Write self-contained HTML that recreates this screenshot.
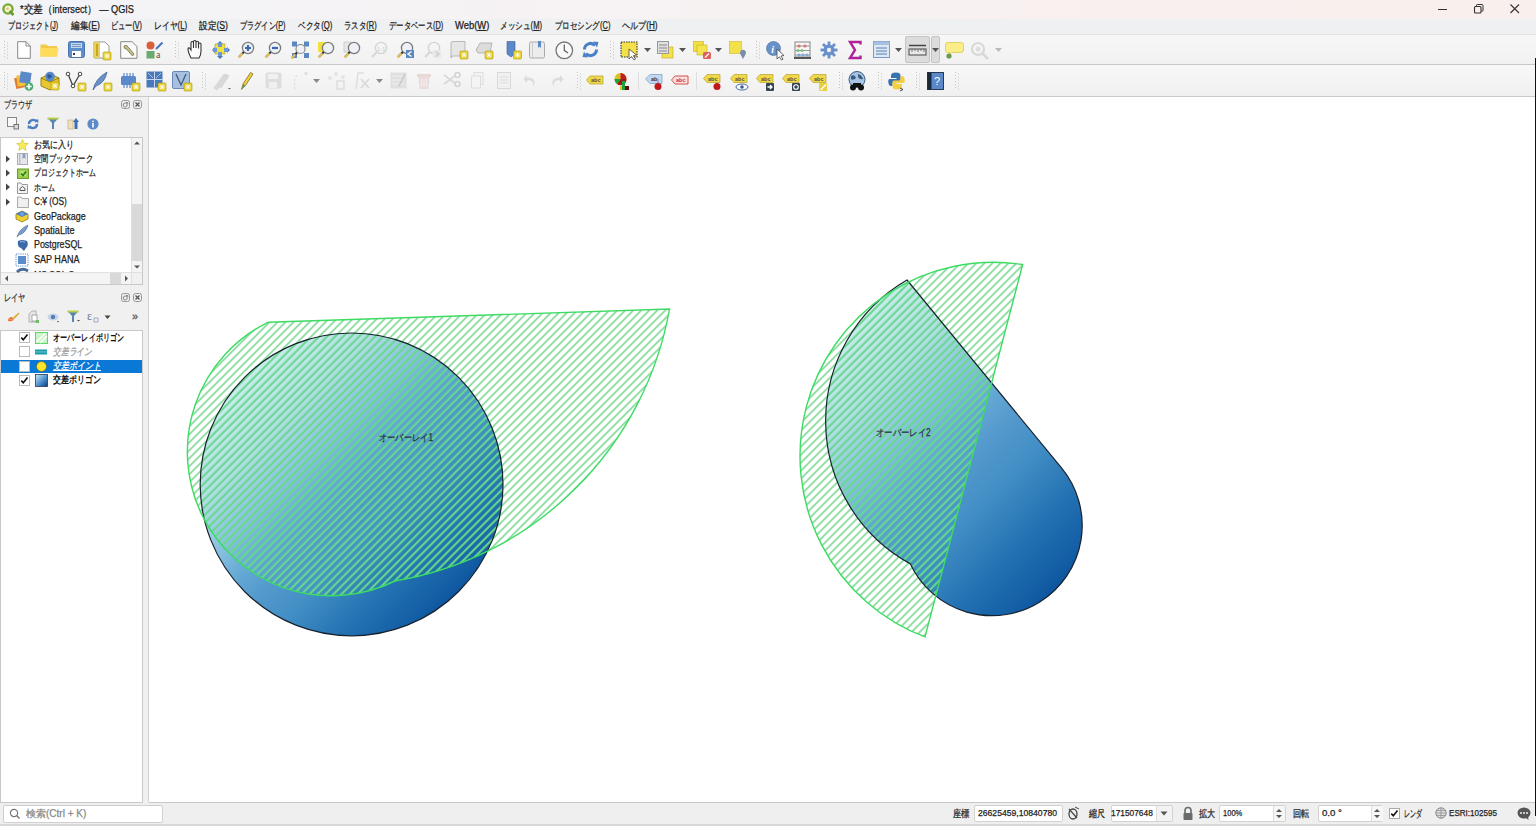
<!DOCTYPE html><html><head><meta charset="utf-8"><style>html,body{margin:0;padding:0;}
body{width:1536px;height:826px;overflow:hidden;position:relative;background:#f0f0f0;font-family:"Liberation Sans", sans-serif;}
.t{position:absolute;white-space:nowrap;line-height:1.2;-webkit-text-stroke:0.25px currentColor;}
svg{overflow:visible}
</style></head><body><div style="position:absolute;left:0px;top:0px;width:1536px;height:19px;background:linear-gradient(90deg,#f3f4f8 0%,#f7f2f3 40%,#f9efec 100%)"></div><svg style="position:absolute;left:2px;top:3px;" width="13" height="13" viewBox="0 0 13 13"><circle cx="6" cy="6" r="4.6" fill="#f0f7c0" stroke="#7aa83a" stroke-width="2.4"/><circle cx="5.5" cy="5.8" r="1.3" fill="#e7b39a"/><path d="M7.5 8 L11.5 12" stroke="#6b9a2e" stroke-width="2.6"/></svg><div class="t" style="left:19.5px;top:3px;font-size:10.5px;color:#1a1a1a;font-weight:normal;font-style:normal;"><span style="display:inline-block;transform:scaleX(0.8745);transform-origin:0 0;">*交差（intersect） — QGIS</span></div><svg style="position:absolute;left:1437px;top:3px;" width="12" height="12" viewBox="0 0 12 12"><path d="M1 6.5 H10" stroke="#333" stroke-width="1"/></svg><svg style="position:absolute;left:1473px;top:3px;" width="12" height="12" viewBox="0 0 12 12"><rect x="1.5" y="3.5" width="6.5" height="6.5" rx="1" fill="none" stroke="#333" stroke-width="1.1"/><path d="M3.5 3.2 V2.2 Q3.5 1.5 4.2 1.5 H9 Q10 1.5 10 2.5 V7.5 Q10 8.2 9.2 8.2 H8.3" fill="none" stroke="#333" stroke-width="1"/></svg><svg style="position:absolute;left:1509px;top:3px;" width="12" height="12" viewBox="0 0 12 12"><path d="M1.5 1.5 L10 10 M10 1.5 L1.5 10" stroke="#333" stroke-width="1.1"/></svg><div style="position:absolute;left:0px;top:19px;width:1536px;height:15px;background:#eff0f1"></div><div class="t" style="left:8.4px;top:20px;font-size:10px;color:#222;font-weight:normal;font-style:normal;"><span style="display:inline-block;transform:scaleX(0.7003);transform-origin:0 0;">プロジェクト(<u>J</u>)</span></div><div class="t" style="left:70.8px;top:20px;font-size:10px;color:#222;font-weight:normal;font-style:normal;"><span style="display:inline-block;transform:scaleX(0.8633);transform-origin:0 0;">編集(<u>E</u>)</span></div><div class="t" style="left:110.6px;top:20px;font-size:10px;color:#222;font-weight:normal;font-style:normal;"><span style="display:inline-block;transform:scaleX(0.7150);transform-origin:0 0;">ビュー(<u>V</u>)</span></div><div class="t" style="left:153.8px;top:20px;font-size:10px;color:#222;font-weight:normal;font-style:normal;"><span style="display:inline-block;transform:scaleX(0.7858);transform-origin:0 0;">レイヤ(<u>L</u>)</span></div><div class="t" style="left:199px;top:20px;font-size:10px;color:#222;font-weight:normal;font-style:normal;"><span style="display:inline-block;transform:scaleX(0.8693);transform-origin:0 0;">設定(<u>S</u>)</span></div><div class="t" style="left:240px;top:20px;font-size:10px;color:#222;font-weight:normal;font-style:normal;"><span style="display:inline-block;transform:scaleX(0.7165);transform-origin:0 0;">プラグイン(<u>P</u>)</span></div><div class="t" style="left:297.6px;top:20px;font-size:10px;color:#222;font-weight:normal;font-style:normal;"><span style="display:inline-block;transform:scaleX(0.7736);transform-origin:0 0;">ベクタ(<u>Q</u>)</span></div><div class="t" style="left:344.4px;top:20px;font-size:10px;color:#222;font-weight:normal;font-style:normal;"><span style="display:inline-block;transform:scaleX(0.7445);transform-origin:0 0;">ラスタ(<u>R</u>)</span></div><div class="t" style="left:388.7px;top:20px;font-size:10px;color:#222;font-weight:normal;font-style:normal;"><span style="display:inline-block;transform:scaleX(0.7332);transform-origin:0 0;">データベース(<u>D</u>)</span></div><div class="t" style="left:455px;top:20px;font-size:10px;color:#222;font-weight:normal;font-style:normal;"><span style="display:inline-block;transform:scaleX(0.9421);transform-origin:0 0;">Web(<u>W</u>)</span></div><div class="t" style="left:500.4px;top:20px;font-size:10px;color:#222;font-weight:normal;font-style:normal;"><span style="display:inline-block;transform:scaleX(0.7650);transform-origin:0 0;">メッシュ(<u>M</u>)</span></div><div class="t" style="left:554.6px;top:20px;font-size:10px;color:#222;font-weight:normal;font-style:normal;"><span style="display:inline-block;transform:scaleX(0.7494);transform-origin:0 0;">プロセシング(<u>C</u>)</span></div><div class="t" style="left:622px;top:20px;font-size:10px;color:#222;font-weight:normal;font-style:normal;"><span style="display:inline-block;transform:scaleX(0.8083);transform-origin:0 0;">ヘルプ(<u>H</u>)</span></div><div style="position:absolute;left:0px;top:34px;width:1536px;height:31px;background:linear-gradient(#f7f7f7,#f1f1f1);border-top:1px solid #e2e2e2;box-sizing:border-box"></div><div style="position:absolute;left:0px;top:64px;width:1536px;height:1px;background:#c9c9c9"></div><div style="position:absolute;left:0px;top:65px;width:1536px;height:31px;background:linear-gradient(#f8f8f8,#f0f0f0)"></div><div style="position:absolute;left:0px;top:96px;width:1536px;height:1px;background:#c9c9c9"></div><div style="position:absolute;left:0px;top:97px;width:148px;height:705px;background:#f0f0f0"></div><div style="position:absolute;left:148px;top:97px;width:1px;height:705px;background:#d2d2d2"></div><div class="t" style="left:3.5px;top:98.5px;font-size:10px;color:#333;font-weight:normal;font-style:normal;"><span style="display:inline-block;transform:scaleX(0.7125);transform-origin:0 0;">ブラウザ</span></div><svg style="position:absolute;left:121px;top:100px;" width="9" height="9" viewBox="0 0 9 9"><rect x="0.5" y="0.5" width="8" height="8" rx="2" fill="#eee" stroke="#999"/><circle cx="4.2" cy="5" r="2" fill="none" stroke="#888" stroke-width="1"/><path d="M5 2.5 H6.8 V4" stroke="#888" fill="none"/></svg><svg style="position:absolute;left:133px;top:100px;" width="9" height="9" viewBox="0 0 9 9"><rect x="0.5" y="0.5" width="8" height="8" rx="2" fill="#eee" stroke="#999"/><path d="M2.5 2.5 L6.5 6.5 M6.5 2.5 L2.5 6.5" stroke="#555" stroke-width="1.3"/></svg><div style="position:absolute;left:0px;top:137px;width:143px;height:148px;background:#fff;border:1px solid #c8c8c8;box-sizing:border-box"></div><div style="position:absolute;left:131px;top:138px;width:11px;height:134px;background:#f4f4f4;border-left:1px solid #e0e0e0;box-sizing:border-box"></div><div style="position:absolute;left:132px;top:204px;width:10px;height:57px;background:#d9d9d9"></div><svg style="position:absolute;left:132px;top:138px;" width="10" height="10" viewBox="0 0 10 10"><path d="M2 6.5 L5 3.5 L8 6.5Z" fill="#555"/></svg><svg style="position:absolute;left:132px;top:262px;" width="10" height="10" viewBox="0 0 10 10"><path d="M2 3.5 L5 6.5 L8 3.5Z" fill="#555"/></svg><div style="position:absolute;left:1px;top:272px;width:130px;height:12px;background:#f4f4f4;border-top:1px solid #e0e0e0;box-sizing:border-box"></div><div style="position:absolute;left:110px;top:273px;width:11px;height:11px;background:#d9d9d9"></div><svg style="position:absolute;left:1px;top:273px;" width="11" height="11" viewBox="0 0 11 11"><path d="M7 2.5 L4 5.5 L7 8.5Z" fill="#555"/></svg><svg style="position:absolute;left:121px;top:273px;" width="11" height="11" viewBox="0 0 11 11"><path d="M4 2.5 L7 5.5 L4 8.5Z" fill="#555"/></svg><div style="position:absolute;left:131px;top:272px;width:11px;height:12px;background:#f0f0f0;border-top:1px solid #e0e0e0;border-left:1px solid #e0e0e0;box-sizing:border-box"></div><div style="position:absolute;left:1px;top:138px;width:130px;height:134px;overflow:hidden"><div class="t" style="left:33px;top:0.5px;font-size:10px;color:#222;font-weight:normal;font-style:normal;"><span style="display:inline-block;transform:scaleX(0.8000);transform-origin:0 0;">お気に入り</span></div><div class="t" style="left:33px;top:15.0px;font-size:10px;color:#222;font-weight:normal;font-style:normal;"><span style="display:inline-block;transform:scaleX(0.7375);transform-origin:0 0;">空間ブックマーク</span></div><svg style="position:absolute;left:4px;top:16.5px" width="6" height="8"><path d="M1 0.5 L5 4 L1 7.5Z" fill="#444"/></svg><div class="t" style="left:33px;top:29.3px;font-size:10px;color:#222;font-weight:normal;font-style:normal;"><span style="display:inline-block;transform:scaleX(0.6922);transform-origin:0 0;">プロジェクトホーム</span></div><svg style="position:absolute;left:4px;top:30.8px" width="6" height="8"><path d="M1 0.5 L5 4 L1 7.5Z" fill="#444"/></svg><div class="t" style="left:33px;top:43.8px;font-size:10px;color:#222;font-weight:normal;font-style:normal;"><span style="display:inline-block;transform:scaleX(0.7000);transform-origin:0 0;">ホーム</span></div><svg style="position:absolute;left:4px;top:45.3px" width="6" height="8"><path d="M1 0.5 L5 4 L1 7.5Z" fill="#444"/></svg><div class="t" style="left:33px;top:58.2px;font-size:10px;color:#222;font-weight:normal;font-style:normal;"><span style="display:inline-block;transform:scaleX(0.8314);transform-origin:0 0;">C:¥ (OS)</span></div><svg style="position:absolute;left:4px;top:59.7px" width="6" height="8"><path d="M1 0.5 L5 4 L1 7.5Z" fill="#444"/></svg><div class="t" style="left:33px;top:72.5px;font-size:10px;color:#222;font-weight:normal;font-style:normal;"><span style="display:inline-block;transform:scaleX(0.8940);transform-origin:0 0;">GeoPackage</span></div><div class="t" style="left:33px;top:87.0px;font-size:10px;color:#222;font-weight:normal;font-style:normal;"><span style="display:inline-block;transform:scaleX(0.9127);transform-origin:0 0;">SpatiaLite</span></div><div class="t" style="left:33px;top:101.4px;font-size:10px;color:#222;font-weight:normal;font-style:normal;"><span style="display:inline-block;transform:scaleX(0.8865);transform-origin:0 0;">PostgreSQL</span></div><div class="t" style="left:33px;top:115.7px;font-size:10px;color:#222;font-weight:normal;font-style:normal;"><span style="display:inline-block;transform:scaleX(0.9010);transform-origin:0 0;">SAP HANA</span></div><div class="t" style="left:33px;top:131.5px;font-size:10px;color:#222;font-weight:normal;font-style:normal;"><span style="display:inline-block;transform:scaleX(0.8614);transform-origin:0 0;">MS SQL Server</span></div></div><svg style="position:absolute;left:16px;top:139px;" width="13" height="12" viewBox="0 0 13 12"><path d="M6.5 0.5 L8.2 4.3 L12.3 4.6 L9.1 7.3 L10.2 11.4 L6.5 9.2 L2.8 11.4 L3.9 7.3 L0.7 4.6 L4.8 4.3Z" fill="#f8ec5a" stroke="#c8b830" stroke-width="0.6"/></svg><svg style="position:absolute;left:17px;top:153px;" width="11" height="12" viewBox="0 0 11 12"><rect x="0.5" y="0.5" width="10" height="11" fill="#e8e8ec" stroke="#aab"/><rect x="2" y="0.5" width="1.5" height="11" fill="#bbc"/><path d="M5.5 0.5 V6 L7 4.8 L8.5 6 V0.5" fill="#8aa0c0"/></svg><svg style="position:absolute;left:17px;top:168px;" width="12" height="11" viewBox="0 0 12 11"><rect x="0.5" y="1" width="11" height="9.5" fill="#9ad04a" stroke="#6a9a30"/><path d="M3 3 L9 3 L9 8 L3 8Z" fill="#b8e070"/><path d="M4 5.5 L6 7.5 L9 3.5" stroke="#2a7a20" stroke-width="1.6" fill="none"/></svg><svg style="position:absolute;left:17px;top:182px;" width="11" height="12" viewBox="0 0 11 12"><path d="M0.5 1 H4 L5 2.5 H10.5 V11.5 H0.5Z" fill="#f4f4f4" stroke="#999"/><path d="M3 8.5 V6.5 L5.5 4.5 L8 6.5 V8.5Z" fill="none" stroke="#444" stroke-width="0.9"/></svg><svg style="position:absolute;left:17px;top:196px;" width="12" height="12" viewBox="0 0 12 12"><path d="M0.5 1 H4 L5 2.5 H11.5 V11.5 H0.5Z" fill="#f0f0f0" stroke="#aaa"/></svg><svg style="position:absolute;left:15px;top:210px;" width="14" height="13" viewBox="0 0 14 13"><path d="M1 4 L7 1 L13 4 V9 L7 12 L1 9Z" fill="#f0d030" stroke="#8a7a10" stroke-width="0.8"/><path d="M1 4 L7 7 L13 4 L7 1Z" fill="#4a80c8"/><circle cx="7" cy="4" r="2" fill="#6aa0e0"/></svg><svg style="position:absolute;left:16px;top:224px;" width="13" height="14" viewBox="0 0 13 14"><path d="M1 13 Q3 5 12 1 Q10 9 3 11Z" fill="#7a9cc8" stroke="#4a6a98" stroke-width="0.6"/></svg><svg style="position:absolute;left:16px;top:239px;" width="13" height="13" viewBox="0 0 13 13"><path d="M2 2 Q6 0 11 2 Q13 6 10 9 L8 12 Q6 10 5 9 Q1 8 2 2Z" fill="#3a6aa8"/><path d="M4 3 Q6 2 9 3" stroke="#b0c8e8" fill="none" stroke-width="0.8"/></svg><svg style="position:absolute;left:15px;top:253px;" width="14" height="14" viewBox="0 0 14 14"><rect x="3" y="3" width="8" height="8" fill="#5a8ccc"/><path d="M1 1 H13 V13 H1Z" fill="none" stroke="#5a8ccc" stroke-dasharray="1.2 1" stroke-width="1"/></svg><svg style="position:absolute;left:16px;top:268px;" width="13" height="6" viewBox="0 0 13 6"><path d="M1 4 Q6 -1 12 3" stroke="#4a6a98" stroke-width="3" fill="none"/></svg><svg style="position:absolute;left:7px;top:117px;" width="12" height="13" viewBox="0 0 12 13"><rect x="0.5" y="0.5" width="9" height="9" fill="#f8f8f8" stroke="#888"/><rect x="7" y="7.5" width="4.5" height="4.5" fill="#ddd" stroke="#666" stroke-width="0.9"/></svg><svg style="position:absolute;left:27px;top:118px;" width="12" height="12" viewBox="0 0 12 12"><path d="M2 6 A4 4 0 0 1 9.5 4" stroke="#4a7fc0" stroke-width="2.4" fill="none"/><path d="M10 6 A4 4 0 0 1 2.5 8" stroke="#4a7fc0" stroke-width="2.4" fill="none"/><path d="M8 1.5 L11.5 1.5 L11 5.5Z" fill="#4a7fc0"/><path d="M4 10.5 L0.5 10.5 L1 6.5Z" fill="#4a7fc0"/></svg><svg style="position:absolute;left:47px;top:117px;" width="12" height="13" viewBox="0 0 12 13"><path d="M0.5 1 H11.5 L7 6 V12 H5 V6Z" fill="#5a86b0"/><rect x="0.5" y="0.5" width="11" height="2" fill="#b8d048"/></svg><svg style="position:absolute;left:67px;top:117px;" width="13" height="13" viewBox="0 0 13 13"><rect x="1" y="3" width="5" height="9" fill="#f0e0c0" stroke="#c0a070" stroke-width="0.6"/><path d="M9 1 L12 5 H10.5 V12 H7.5 V5 H6Z" fill="#3a70b0"/></svg><svg style="position:absolute;left:87px;top:118px;" width="12" height="12" viewBox="0 0 12 12"><circle cx="6" cy="6" r="5.6" fill="#5a8ac8"/><rect x="5.2" y="5" width="1.6" height="4.5" fill="#fff"/><circle cx="6" cy="3.3" r="0.9" fill="#fff"/></svg><div class="t" style="left:3.5px;top:292px;font-size:10px;color:#333;font-weight:normal;font-style:normal;"><span style="display:inline-block;transform:scaleX(0.7167);transform-origin:0 0;">レイヤ</span></div><svg style="position:absolute;left:121px;top:293px;" width="9" height="9" viewBox="0 0 9 9"><rect x="0.5" y="0.5" width="8" height="8" rx="2" fill="#eee" stroke="#999"/><circle cx="4.2" cy="5" r="2" fill="none" stroke="#888" stroke-width="1"/><path d="M5 2.5 H6.8 V4" stroke="#888" fill="none"/></svg><svg style="position:absolute;left:133px;top:293px;" width="9" height="9" viewBox="0 0 9 9"><rect x="0.5" y="0.5" width="8" height="8" rx="2" fill="#eee" stroke="#999"/><path d="M2.5 2.5 L6.5 6.5 M6.5 2.5 L2.5 6.5" stroke="#555" stroke-width="1.3"/></svg><svg style="position:absolute;left:7px;top:311px;" width="13" height="12" viewBox="0 0 13 12"><path d="M1 10 Q1 6 5 6 L7 8 Q6 11 1 10Z" fill="#e8743a"/><path d="M6 6.5 L11.5 1.5 L12.5 2.5 L7.5 8Z" fill="#d8b040"/><path d="M2 8 Q4 9 6 8" stroke="#f0a060" fill="none"/></svg><svg style="position:absolute;left:27px;top:310px;" width="12" height="13" viewBox="0 0 12 13"><path d="M2 12 V4 L5 1 H9 V12Z" fill="#e8e8e8" stroke="#999" stroke-width="0.7"/><rect x="5" y="5" width="5" height="6" fill="#fff" stroke="#888" stroke-width="0.7"/><rect x="9" y="10" width="3" height="3" fill="#6ac060"/></svg><svg style="position:absolute;left:47px;top:311px;" width="14" height="12" viewBox="0 0 14 12"><ellipse cx="6" cy="6" rx="5.5" ry="3.5" fill="#c8d4e8"/><circle cx="6" cy="6" r="2.2" fill="#5a7ab8"/><path d="M10 10 L12 10 L11 11.5Z" fill="#444"/></svg><svg style="position:absolute;left:67px;top:310px;" width="14" height="13" viewBox="0 0 14 13"><path d="M0.5 1 H11.5 L7 6 V12 H5 V6Z" fill="#5a86b0"/><rect x="0.5" y="0.5" width="11" height="2" fill="#b8d048"/><path d="M10 10 L13 10 L11.5 11.5Z" fill="#444"/></svg><svg style="position:absolute;left:87px;top:310px;" width="14" height="14" viewBox="0 0 14 14"><text x="0" y="10" font-size="12" fill="#6a7a9a" font-family="Liberation Serif">ε</text><rect x="7" y="8" width="4" height="4" fill="none" stroke="#8a9ab8" stroke-width="0.8"/></svg><svg style="position:absolute;left:104px;top:315px;" width="7" height="5" viewBox="0 0 7 5"><path d="M0.5 0.5 L6.5 0.5 L3.5 4Z" fill="#444"/></svg><div class="t" style="left:132px;top:310px;font-size:11px;color:#555;font-weight:normal;font-style:normal;"><span style="display:inline-block;">»</span></div><div style="position:absolute;left:0px;top:330px;width:143px;height:473px;background:#fff;border:1px solid #c8c8c8;box-sizing:border-box"></div><div style="position:absolute;left:1px;top:360px;width:141px;height:13px;background:#0a78d6"></div><svg style="position:absolute;left:19px;top:332px;" width="11" height="11" viewBox="0 0 11 11"><rect x="0.5" y="0.5" width="10" height="10" fill="#fff" stroke="#bbb"/><path d="M2.3 5.6 L4.3 7.8 L8.5 2.6" stroke="#111" stroke-width="1.6" fill="none"/></svg><svg style="position:absolute;left:19px;top:346px;" width="11" height="11" viewBox="0 0 11 11"><rect x="0.5" y="0.5" width="10" height="10" fill="#fff" stroke="#bbb"/></svg><svg style="position:absolute;left:19px;top:361px;" width="11" height="11" viewBox="0 0 11 11"><rect x="0.5" y="0.5" width="10" height="10" fill="#fff" stroke="#bbb"/></svg><svg style="position:absolute;left:19px;top:375px;" width="11" height="11" viewBox="0 0 11 11"><rect x="0.5" y="0.5" width="10" height="10" fill="#fff" stroke="#bbb"/><path d="M2.3 5.6 L4.3 7.8 L8.5 2.6" stroke="#111" stroke-width="1.6" fill="none"/></svg><svg style="position:absolute;left:35px;top:332px;" width="13" height="12" viewBox="0 0 13 12"><rect x="0.5" y="0.5" width="12" height="11" fill="#c8f4c8" stroke="#56d86a"/><path d="M1.5 10 L10 1.5 M5 11 L12 4" stroke="#fff" stroke-width="1.5"/></svg><svg style="position:absolute;left:35px;top:349px;" width="12" height="6" viewBox="0 0 12 6"><rect x="0" y="0.5" width="12" height="5" fill="#1a9aaa"/><rect x="0" y="2.3" width="12" height="1.2" fill="#60c0c8"/></svg><svg style="position:absolute;left:35px;top:360px;" width="13" height="13" viewBox="0 0 13 13"><circle cx="6.5" cy="6.5" r="5" fill="#fbe62a" stroke="#5a5a20" stroke-width="0.6"/></svg><svg style="position:absolute;left:35px;top:374px;" width="13" height="13" viewBox="0 0 13 13"><defs><linearGradient id="lg0" x1="0" y1="0" x2="1" y2="1"><stop offset="0" stop-color="#d4ecf6"/><stop offset="0.55" stop-color="#4a90d0"/><stop offset="1" stop-color="#0a3a7a"/></linearGradient></defs><rect x="0.5" y="0.5" width="12" height="12" fill="url(#lg0)" stroke="#2a3a50" stroke-width="0.8"/></svg><div class="t" style="left:53px;top:331.5px;font-size:10px;color:#111;font-weight:bold;font-style:normal;-webkit-text-stroke:0"><span style="display:inline-block;transform:scaleX(0.7100);transform-origin:0 0;">オーバーレイポリゴン</span></div><div class="t" style="left:53px;top:345.5px;font-size:10px;color:#999;font-weight:normal;font-style:italic;"><span style="display:inline-block;transform:scaleX(0.7800);transform-origin:0 0;">交差ライン</span></div><div class="t" style="left:53px;top:360px;font-size:10px;color:#fff;font-weight:normal;font-style:italic;"><span style="display:inline-block;transform:scaleX(0.8000);transform-origin:0 0;"><u>交差ポイント</u></span></div><div class="t" style="left:53px;top:374px;font-size:10px;color:#111;font-weight:bold;font-style:normal;-webkit-text-stroke:0"><span style="display:inline-block;transform:scaleX(0.8000);transform-origin:0 0;">交差ポリゴン</span></div><div style="position:absolute;left:149px;top:97px;width:1386px;height:705px;background:#fff"></div><div style="position:absolute;left:149px;top:802px;width:1386px;height:1px;background:#c8c8c8"></div><svg style="position:absolute;left:0;top:0" width="1536" height="826" viewBox="0 0 1536 826"><defs>
<linearGradient id="g1" gradientUnits="userSpaceOnUse" x1="244.6" y1="377.4" x2="458.6" y2="591.4"><stop offset="0" stop-color="#d2edf3"/><stop offset="0.2" stop-color="#b6dceb"/><stop offset="0.35" stop-color="#86c0de"/><stop offset="0.45" stop-color="#64a8d4"/><stop offset="0.55" stop-color="#5298cc"/><stop offset="0.65" stop-color="#4490c6"/><stop offset="0.83" stop-color="#2371b2"/><stop offset="0.97" stop-color="#125ca4"/><stop offset="1" stop-color="#0e559e"/></linearGradient>
<linearGradient id="g2" gradientUnits="userSpaceOnUse" x1="901" y1="274" x2="1136" y2="509"><stop offset="0" stop-color="#d2edf3"/><stop offset="0.2" stop-color="#b6dceb"/><stop offset="0.35" stop-color="#86c0de"/><stop offset="0.45" stop-color="#64a8d4"/><stop offset="0.55" stop-color="#5298cc"/><stop offset="0.65" stop-color="#4490c6"/><stop offset="0.83" stop-color="#2371b2"/><stop offset="0.97" stop-color="#125ca4"/><stop offset="1" stop-color="#0e559e"/></linearGradient>
<pattern id="hpA" patternUnits="userSpaceOnUse" width="5.657" height="20" patternTransform="translate(-1.7 0) rotate(45)"><rect x="0.275" y="0" width="1.4" height="20" fill="#6cd488"/></pattern>
<pattern id="hpB" patternUnits="userSpaceOnUse" width="5.657" height="20" patternTransform="translate(-1.7 0) rotate(45)"><rect x="0.125" y="0" width="1.7" height="20" fill="#64dc8c"/></pattern>
<clipPath id="cB"><path d="M200.2,484.4 A151.4 151.4 0 1 1 503,484.4 A151.4 151.4 0 1 1 200.2,484.4 Z M907.00,280.00 L1061.69,468.23 A90.2 90.2 0 1 1 910.38,563.90 A162.86 162.86 0 0 1 907.00,280.00 Z"/></clipPath>
</defs><path d="M200.2,484.4 A151.4 151.4 0 1 1 503,484.4 A151.4 151.4 0 1 1 200.2,484.4 Z" fill="url(#g1)"/><path d="M907.00,280.00 L1061.69,468.23 A90.2 90.2 0 1 1 910.38,563.90 A162.86 162.86 0 0 1 907.00,280.00 Z" fill="url(#g2)"/><path d="M268,322.3 L669.5,309 A335 335 0 0 1 395,581 A143.8 143.8 0 1 1 268,322.3 Z" fill="url(#hpA)"/><path d="M268,322.3 L669.5,309 A335 335 0 0 1 395,581 A143.8 143.8 0 1 1 268,322.3 Z" fill="#64dc8c" fill-opacity="0.07" clip-path="url(#cB)"/><path d="M268,322.3 L669.5,309 A335 335 0 0 1 395,581 A143.8 143.8 0 1 1 268,322.3 Z" fill="url(#hpB)" fill-opacity="0.8" clip-path="url(#cB)"/><path d="M1022.63,264.49 A193.6 193.6 0 0 0 925.01,636.94 Z" fill="url(#hpA)"/><path d="M1022.63,264.49 A193.6 193.6 0 0 0 925.01,636.94 Z" fill="#64dc8c" fill-opacity="0.07" clip-path="url(#cB)"/><path d="M1022.63,264.49 A193.6 193.6 0 0 0 925.01,636.94 Z" fill="url(#hpB)" fill-opacity="0.8" clip-path="url(#cB)"/><path d="M200.2,484.4 A151.4 151.4 0 1 1 503,484.4 A151.4 151.4 0 1 1 200.2,484.4 Z M907.00,280.00 L1061.69,468.23 A90.2 90.2 0 1 1 910.38,563.90 A162.86 162.86 0 0 1 907.00,280.00 Z" fill="none" stroke="#18222e" stroke-width="1.2"/><path d="M268,322.3 L669.5,309 A335 335 0 0 1 395,581 A143.8 143.8 0 1 1 268,322.3 Z" fill="none" stroke="#3cdc62" stroke-width="1.4"/><path d="M1022.63,264.49 A193.6 193.6 0 0 0 925.01,636.94 Z" fill="none" stroke="#3cdc62" stroke-width="1.4"/></svg><div class="t" style="left:379px;top:431.5px;font-size:10px;color:#2a3440;font-weight:normal;font-style:normal;"><span style="display:inline-block;transform:scaleX(0.8236);transform-origin:0 0;">オーバーレイ1</span></div><div class="t" style="left:875.8px;top:426.5px;font-size:10px;color:#2a3440;font-weight:normal;font-style:normal;"><span style="display:inline-block;transform:scaleX(0.8313);transform-origin:0 0;">オーバーレイ2</span></div><div style="position:absolute;left:0px;top:803px;width:1536px;height:21px;background:#efefef"></div><div style="position:absolute;left:0px;top:824px;width:1536px;height:2px;background:#d8d8d8"></div><div style="position:absolute;left:3px;top:805px;width:160px;height:18px;background:#fff;border:1px solid #cfcfcf;border-radius:2px;box-sizing:border-box"></div><svg style="position:absolute;left:9px;top:808px;" width="12" height="12" viewBox="0 0 12 12"><circle cx="5" cy="5" r="3.6" fill="none" stroke="#777" stroke-width="1.2"/><path d="M7.6 7.6 L10.5 10.5" stroke="#777" stroke-width="1.4"/></svg><div class="t" style="left:26px;top:807.5px;font-size:10px;color:#888;font-weight:normal;font-style:normal;"><span style="display:inline-block;">検索(Ctrl + K)</span></div><div class="t" style="left:953px;top:807.5px;font-size:10px;color:#222;font-weight:normal;font-style:normal;"><span style="display:inline-block;transform:scaleX(0.8300);transform-origin:0 0;">座標</span></div><div style="position:absolute;left:973.5px;top:805px;width:89.5px;height:17px;background:#fff;border:1px solid #d2d2d2;border-radius:2px;box-sizing:border-box"></div><div class="t" style="left:978px;top:807.5px;font-size:9px;color:#222;font-weight:normal;font-style:normal;"><span style="display:inline-block;transform:scaleX(0.9565);transform-origin:0 0;">26625459,10840780</span></div><svg style="position:absolute;left:1066px;top:806px;" width="14" height="15" viewBox="0 0 14 15"><path d="M3 3 L11 12" stroke="#444" stroke-width="1.2"/><ellipse cx="7" cy="8" rx="4" ry="5" fill="none" stroke="#444" stroke-width="1.3"/><path d="M9 1 L13 3" stroke="#444"/></svg><div class="t" style="left:1089px;top:807.5px;font-size:10px;color:#222;font-weight:normal;font-style:normal;"><span style="display:inline-block;transform:scaleX(0.8000);transform-origin:0 0;">縮尺</span></div><div style="position:absolute;left:1110.5px;top:805px;width:62px;height:17px;background:#fff;border:1px solid #d2d2d2;border-radius:2px;box-sizing:border-box"></div><div style="position:absolute;left:1156px;top:806px;width:16px;height:15px;background:#f3f3f3;border-left:1px solid #ddd;box-sizing:border-box"></div><svg style="position:absolute;left:1160px;top:811px;" width="8" height="5" viewBox="0 0 8 5"><path d="M0.5 0.5 L7.5 0.5 L4 4.5Z" fill="#555"/></svg><div class="t" style="left:1111px;top:807.5px;font-size:9px;color:#222;font-weight:normal;font-style:normal;"><span style="display:inline-block;transform:scaleX(0.9276);transform-origin:0 0;">171507648</span></div><svg style="position:absolute;left:1182px;top:806px;" width="12" height="15" viewBox="0 0 12 15"><path d="M3 7 V4.5 A3 3 0 0 1 9 4.5 V7" fill="none" stroke="#6a6a6a" stroke-width="1.6"/><rect x="1.5" y="7" width="9" height="7" rx="1" fill="#6a6a6a"/></svg><div class="t" style="left:1199.3px;top:807.5px;font-size:10px;color:#222;font-weight:normal;font-style:normal;"><span style="display:inline-block;transform:scaleX(0.8050);transform-origin:0 0;">拡大</span></div><div style="position:absolute;left:1219px;top:805px;width:67px;height:17px;background:#fff;border:1px solid #d2d2d2;border-radius:2px;box-sizing:border-box"></div><div style="position:absolute;left:1273px;top:806px;width:12px;height:15px;background:#f6f6f6;border-left:1px solid #ddd;box-sizing:border-box"></div><svg style="position:absolute;left:1274px;top:807px;" width="10" height="13" viewBox="0 0 10 13"><path d="M2 5 L5 2 L8 5Z M2 8 L5 11 L8 8Z" fill="#555"/></svg><div class="t" style="left:1223px;top:807.5px;font-size:9px;color:#222;font-weight:normal;font-style:normal;"><span style="display:inline-block;transform:scaleX(0.8380);transform-origin:0 0;">100%</span></div><div class="t" style="left:1292.6px;top:807.5px;font-size:10px;color:#222;font-weight:normal;font-style:normal;"><span style="display:inline-block;transform:scaleX(0.8200);transform-origin:0 0;">回転</span></div><div style="position:absolute;left:1318px;top:805px;width:65px;height:17px;background:#fff;border:1px solid #d2d2d2;border-radius:2px;box-sizing:border-box"></div><div style="position:absolute;left:1371px;top:806px;width:12px;height:15px;background:#f6f6f6;border-left:1px solid #ddd;box-sizing:border-box"></div><svg style="position:absolute;left:1372px;top:807px;" width="10" height="13" viewBox="0 0 10 13"><path d="M2 5 L5 2 L8 5Z M2 8 L5 11 L8 8Z" fill="#555"/></svg><div class="t" style="left:1322px;top:807.5px;font-size:9px;color:#222;font-weight:normal;font-style:normal;"><span style="display:inline-block;transform:scaleX(1.0738);transform-origin:0 0;">0.0 °</span></div><svg style="position:absolute;left:1389px;top:808px;" width="11" height="11" viewBox="0 0 11 11"><rect x="0.5" y="0.5" width="10" height="10" fill="#fff" stroke="#aaa"/><path d="M2.3 5.6 L4.3 7.8 L8.5 2.6" stroke="#111" stroke-width="1.6" fill="none"/></svg><div class="t" style="left:1404px;top:807.5px;font-size:10px;color:#222;font-weight:normal;font-style:normal;"><span style="display:inline-block;transform:scaleX(0.6000);transform-origin:0 0;">レンダ</span></div><svg style="position:absolute;left:1435px;top:807px;" width="12" height="12" viewBox="0 0 12 12"><circle cx="6" cy="6" r="5.2" fill="#ddd" stroke="#888"/><path d="M1 6 H11 M6 1 V11 M2 3.5 H10 M2 8.5 H10" stroke="#888" stroke-width="0.7"/></svg><div class="t" style="left:1449px;top:807.5px;font-size:9px;color:#222;font-weight:normal;font-style:normal;"><span style="display:inline-block;transform:scaleX(0.8964);transform-origin:0 0;">ESRI:102595</span></div><svg style="position:absolute;left:1517px;top:807px;" width="14" height="14" viewBox="0 0 14 14"><ellipse cx="7" cy="6" rx="6.5" ry="5.5" fill="#555"/><path d="M8 10 L11.5 13 L11 8.5Z" fill="#555"/><circle cx="4" cy="6" r="0.9" fill="#fff"/><circle cx="7" cy="6" r="0.9" fill="#fff"/><circle cx="10" cy="6" r="0.9" fill="#fff"/></svg><svg style="position:absolute;left:4px;top:41px;" width="4" height="18" viewBox="0 0 4 18"><rect x="0" y="0" width="1" height="1" fill="#c4c4c4"/><rect x="3" y="1.5" width="1" height="1" fill="#c4c4c4"/><rect x="0" y="3" width="1" height="1" fill="#c4c4c4"/><rect x="3" y="4.5" width="1" height="1" fill="#c4c4c4"/><rect x="0" y="6" width="1" height="1" fill="#c4c4c4"/><rect x="3" y="7.5" width="1" height="1" fill="#c4c4c4"/><rect x="0" y="9" width="1" height="1" fill="#c4c4c4"/><rect x="3" y="10.5" width="1" height="1" fill="#c4c4c4"/><rect x="0" y="12" width="1" height="1" fill="#c4c4c4"/><rect x="3" y="13.5" width="1" height="1" fill="#c4c4c4"/><rect x="0" y="15" width="1" height="1" fill="#c4c4c4"/><rect x="3" y="16.5" width="1" height="1" fill="#c4c4c4"/></svg><svg style="position:absolute;left:17px;top:41px;" width="14" height="18" viewBox="0 0 14 18"><path d="M0.7 0.7 H9 L13.3 5 V17.3 H0.7Z" fill="#fff" stroke="#888" stroke-width="1"/><path d="M9 0.7 V5 H13.3" fill="none" stroke="#888"/></svg><svg style="position:absolute;left:40px;top:43px;" width="19" height="14" viewBox="0 0 19 14"><path d="M0.5 1.5 H6.5 L8 3 H17 V13.5 H0.5Z" fill="#f2c94c"/><path d="M0.5 5 H18.5 L17 13.5 H0.5Z" fill="#ffdc5c"/></svg><svg style="position:absolute;left:68px;top:41px;" width="17" height="17" viewBox="0 0 17 17"><rect x="0.5" y="0.5" width="16" height="16" rx="2" fill="#5e8fcd" stroke="#4a74aa"/><rect x="3" y="2" width="11" height="5" fill="#c4d6ee"/><rect x="4" y="3" width="9" height="1" fill="#7a9ac8"/><rect x="4" y="5" width="9" height="1" fill="#7a9ac8"/><rect x="4" y="10" width="9" height="6" fill="#fff"/><rect x="5" y="12" width="2" height="2" fill="#335"/></svg><svg style="position:absolute;left:93px;top:41px;" width="19" height="19" viewBox="0 0 19 19"><path d="M1 1 H12 L16 5 V17 H1Z" fill="#fff" stroke="#999"/><path d="M1 1 H7 V17 H1Z" fill="#e8d060"/><rect x="3" y="3" width="2" height="12" fill="#c8a820"/><rect x="10" y="11" width="8" height="8" rx="1" fill="#e8d030" stroke="#b09a10" stroke-width="0.6"/><path d="M14.0 12.2 L14.0 17.8 M11.2 15.0 L16.8 15.0 M11.8 12.8 L16.2 17.2 M16.2 12.8 L11.8 17.2" stroke="#fff" stroke-width="0.8"/></svg><svg style="position:absolute;left:120px;top:41px;" width="18" height="18" viewBox="0 0 18 18"><path d="M0.7 0.7 H12 L17 5.5 V17.3 H0.7Z" fill="#fafafa" stroke="#888"/><path d="M4 5 Q7 3 8 6 L14 13 L12.5 15 L6.5 8 Q3.5 8 4 5Z" fill="#c8c080" stroke="#707050" stroke-width="0.8"/></svg><svg style="position:absolute;left:146px;top:41px;" width="18" height="18" viewBox="0 0 18 18"><circle cx="4.5" cy="4.5" r="4" fill="#d9603a"/><rect x="0.5" y="10" width="8" height="7.5" fill="#6aaa70"/><path d="M10 8 L16.5 1.5" stroke="#4a78c0" stroke-width="2.2"/><text x="10" y="17" font-size="10" fill="#555" font-family="Liberation Serif">a</text></svg><svg style="position:absolute;left:175px;top:41px;" width="4" height="18" viewBox="0 0 4 18"><rect x="0" y="0" width="1" height="1" fill="#c4c4c4"/><rect x="3" y="1.5" width="1" height="1" fill="#c4c4c4"/><rect x="0" y="3" width="1" height="1" fill="#c4c4c4"/><rect x="3" y="4.5" width="1" height="1" fill="#c4c4c4"/><rect x="0" y="6" width="1" height="1" fill="#c4c4c4"/><rect x="3" y="7.5" width="1" height="1" fill="#c4c4c4"/><rect x="0" y="9" width="1" height="1" fill="#c4c4c4"/><rect x="3" y="10.5" width="1" height="1" fill="#c4c4c4"/><rect x="0" y="12" width="1" height="1" fill="#c4c4c4"/><rect x="3" y="13.5" width="1" height="1" fill="#c4c4c4"/><rect x="0" y="15" width="1" height="1" fill="#c4c4c4"/><rect x="3" y="16.5" width="1" height="1" fill="#c4c4c4"/></svg><svg style="position:absolute;left:187px;top:40px;" width="16" height="19" viewBox="0 0 16 19"><path d="M4 18 Q1 12 1 9 Q1 7.5 2.5 8 L4 10 V3 Q4 1.5 5.3 1.5 Q6.5 1.5 6.5 3 V8 V1.8 Q6.5 0.5 7.8 0.5 Q9 0.5 9 1.8 V8 V2.5 Q9 1.2 10.3 1.2 Q11.5 1.2 11.5 2.5 V8.5 V4 Q11.5 3 12.7 3 Q14 3 14 4 V11 Q14 15 12 18Z" fill="#fff" stroke="#333" stroke-width="1.1"/></svg><svg style="position:absolute;left:212px;top:41px;" width="18" height="18" viewBox="0 0 18 18"><rect x="3" y="3" width="10" height="10" fill="#f0e040" stroke="#b0a020" stroke-width="0.6"/><path d="M8 0 L11 3 H5Z M8 18 L11 15 H5Z M0 9 L3 6 V12Z M18 9 L15 6 V12Z" fill="#4a78c0"/><rect x="6" y="2" width="4" height="4" fill="#6a98d8"/><rect x="6" y="11" width="4" height="4" fill="#6a98d8"/><rect x="1" y="7" width="4" height="4" fill="#6a98d8"/><rect x="12" y="7" width="4" height="4" fill="#6a98d8"/></svg><svg style="position:absolute;left:237px;top:41px;" width="19" height="19" viewBox="0 0 19 19"><circle cx="11" cy="7" r="5.6" fill="#eef2f6" stroke="#7c7c7c" stroke-width="1.3"/><path d="M6.8 11 L2 16" stroke="#333" stroke-width="2"/><path d="M5.5 12.5 L1.5 16.5" stroke="#e0c060" stroke-width="2.4"/><path d="M11 4 V10 M8 7 H14" stroke="#3a6ab0" stroke-width="2.2"/></svg><svg style="position:absolute;left:264px;top:41px;" width="19" height="19" viewBox="0 0 19 19"><circle cx="11" cy="7" r="5.6" fill="#eef2f6" stroke="#7c7c7c" stroke-width="1.3"/><path d="M6.8 11 L2 16" stroke="#333" stroke-width="2"/><path d="M5.5 12.5 L1.5 16.5" stroke="#e0c060" stroke-width="2.4"/><path d="M8 7 H14" stroke="#3a6ab0" stroke-width="2.2"/></svg><svg style="position:absolute;left:290px;top:41px;" width="20" height="19" viewBox="0 0 20 19"><rect x="2" y="0.5" width="5" height="5" fill="#5a88c0"/><rect x="14" y="0.5" width="5" height="5" fill="#5a88c0"/><rect x="14" y="12" width="5" height="5" fill="#5a88c0"/><rect x="2" y="12" width="5" height="5" fill="#5a88c0"/><circle cx="10.5" cy="8" r="4.5" fill="#eef2f6" stroke="#888" stroke-width="1.2"/><path d="M7 11.5 L2 17" stroke="#333" stroke-width="2"/><path d="M5.3 13.3 L1.5 17.5" stroke="#e0c060" stroke-width="2.4"/></svg><svg style="position:absolute;left:317px;top:41px;" width="19" height="19" viewBox="0 0 19 19"><rect x="1" y="1" width="7" height="10" fill="#f0e040"/><circle cx="11" cy="7" r="5.6" fill="#eef2f6" stroke="#7c7c7c" stroke-width="1.3"/><path d="M6.8 11 L2 16" stroke="#333" stroke-width="2"/><path d="M5.5 12.5 L1.5 16.5" stroke="#e0c060" stroke-width="2.4"/></svg><svg style="position:absolute;left:343px;top:41px;" width="19" height="19" viewBox="0 0 19 19"><rect x="1" y="1" width="7" height="10" fill="#e8e8e8" stroke="#bbb" stroke-width="0.6"/><circle cx="11" cy="7" r="5.6" fill="#eef2f6" stroke="#7c7c7c" stroke-width="1.3"/><path d="M6.8 11 L2 16" stroke="#333" stroke-width="2"/><path d="M5.5 12.5 L1.5 16.5" stroke="#e0c060" stroke-width="2.4"/></svg><svg style="position:absolute;left:370px;top:41px;" width="19" height="19" viewBox="0 0 19 19"><circle cx="11" cy="7" r="5.6" fill="none" stroke="#d4d4d4" stroke-width="1.4"/><path d="M6.8 11 L2 16" stroke="#d8d8d8" stroke-width="2.2"/><text x="7" y="10" font-size="6" fill="#ccc" font-family="Liberation Sans">1:1</text></svg><svg style="position:absolute;left:396px;top:41px;" width="19" height="19" viewBox="0 0 19 19"><circle cx="11" cy="7" r="5.6" fill="#eef2f6" stroke="#7c7c7c" stroke-width="1.3"/><path d="M6.8 11 L2 16" stroke="#333" stroke-width="2"/><path d="M5.5 12.5 L1.5 16.5" stroke="#e0c060" stroke-width="2.4"/><rect x="10" y="9" width="8" height="8" fill="#5a88c0"/><path d="M15.5 10.5 L12 13 L15.5 15.5" stroke="#fff" stroke-width="1.4" fill="none"/></svg><svg style="position:absolute;left:423px;top:41px;" width="19" height="19" viewBox="0 0 19 19"><circle cx="11" cy="7" r="5.6" fill="none" stroke="#d4d4d4" stroke-width="1.4"/><path d="M6.8 11 L2 16" stroke="#d8d8d8" stroke-width="2.2"/><rect x="10" y="9" width="8" height="8" fill="#e8e8e8"/><path d="M12.5 10.5 L16 13 L12.5 15.5" stroke="#ccc" stroke-width="1.4" fill="none"/></svg><svg style="position:absolute;left:450px;top:41px;" width="19" height="19" viewBox="0 0 19 19"><path d="M1 2 Q1 0.5 3 0.5 H15 V15 H3 Q1 15 1 17Z" fill="#e6e6e6" stroke="#aaa" stroke-width="0.8"/><rect x="10" y="10" width="8" height="8" rx="1" fill="#e8d030" stroke="#b09a10" stroke-width="0.6"/><path d="M14.0 11.2 L14.0 16.8 M11.2 14.0 L16.8 14.0 M11.8 11.8 L16.2 16.2 M16.2 11.8 L11.8 16.2" stroke="#fff" stroke-width="0.8"/></svg><svg style="position:absolute;left:475px;top:41px;" width="19" height="19" viewBox="0 0 19 19"><path d="M1 9 L5 2 H17 L15 12 H3Z" fill="#dcdcdc" stroke="#aaa" stroke-width="0.8"/><rect x="10" y="10" width="8" height="8" rx="1" fill="#e8d030" stroke="#b09a10" stroke-width="0.6"/><path d="M14.0 11.2 L14.0 16.8 M11.2 14.0 L16.8 14.0 M11.8 11.8 L16.2 16.2 M16.2 11.8 L11.8 16.2" stroke="#fff" stroke-width="0.8"/></svg><svg style="position:absolute;left:506px;top:41px;" width="16" height="19" viewBox="0 0 16 19"><path d="M1 0.5 H9 V13 L5 16 L1 13Z" fill="#5a88c8" stroke="#3a60a0" stroke-width="0.6"/><rect x="7.5" y="10" width="8" height="8" rx="1" fill="#e8d030" stroke="#b09a10" stroke-width="0.6"/><path d="M11.5 11.2 L11.5 16.8 M8.7 14.0 L14.3 14.0 M9.3 11.8 L13.7 16.2 M13.7 11.8 L9.3 16.2" stroke="#fff" stroke-width="0.8"/></svg><svg style="position:absolute;left:529px;top:41px;" width="17" height="18" viewBox="0 0 17 18"><rect x="0.5" y="1" width="15" height="16" rx="1.5" fill="#ececec" stroke="#aaa"/><rect x="3" y="1" width="1" height="16" fill="#ccc"/><path d="M9 0 V7 L10.5 5.5 L12 7 V0Z" fill="#5a88c8"/></svg><svg style="position:absolute;left:555px;top:41px;" width="19" height="19" viewBox="0 0 19 19"><circle cx="9.3" cy="9.3" r="8.3" fill="#fafafa" stroke="#777" stroke-width="1.3"/><path d="M9.3 3.5 V9.3 L13 12" stroke="#666" stroke-width="1.3" fill="none"/></svg><svg style="position:absolute;left:582px;top:41px;" width="17" height="17" viewBox="0 0 17 17"><path d="M2.5 8.5 A6 6 0 0 1 13 4.5" stroke="#4a80c8" stroke-width="3" fill="none"/><path d="M14.5 8.5 A6 6 0 0 1 4 12.5" stroke="#4a80c8" stroke-width="3" fill="none"/><path d="M11 0.5 L16.5 1 L15 6.5Z M6 16.5 L0.5 16 L2 10.5Z" fill="#4a80c8"/></svg><svg style="position:absolute;left:610px;top:41px;" width="4" height="18" viewBox="0 0 4 18"><rect x="0" y="0" width="1" height="1" fill="#c4c4c4"/><rect x="3" y="1.5" width="1" height="1" fill="#c4c4c4"/><rect x="0" y="3" width="1" height="1" fill="#c4c4c4"/><rect x="3" y="4.5" width="1" height="1" fill="#c4c4c4"/><rect x="0" y="6" width="1" height="1" fill="#c4c4c4"/><rect x="3" y="7.5" width="1" height="1" fill="#c4c4c4"/><rect x="0" y="9" width="1" height="1" fill="#c4c4c4"/><rect x="3" y="10.5" width="1" height="1" fill="#c4c4c4"/><rect x="0" y="12" width="1" height="1" fill="#c4c4c4"/><rect x="3" y="13.5" width="1" height="1" fill="#c4c4c4"/><rect x="0" y="15" width="1" height="1" fill="#c4c4c4"/><rect x="3" y="16.5" width="1" height="1" fill="#c4c4c4"/></svg><svg style="position:absolute;left:620px;top:41px;" width="20" height="19" viewBox="0 0 20 19"><rect x="1" y="1" width="16" height="15" fill="#f4e04a" stroke="#333" stroke-dasharray="1.5 1" stroke-width="1.1"/><path d="M9 8 L9 18 L11.5 15.5 L14 19 L15.5 18 L13.3 14.7 L16.5 14Z" fill="#fff" stroke="#444" stroke-width="0.8"/></svg><svg style="position:absolute;left:644px;top:48px;" width="7" height="4" viewBox="0 0 7 4"><path d="M0 0 H7 L3.5 4Z" fill="#555"/></svg><svg style="position:absolute;left:657px;top:41px;" width="17" height="18" viewBox="0 0 17 18"><rect x="5" y="6" width="11" height="11" fill="#f4e04a" stroke="#c0a820" stroke-width="0.6"/><rect x="0.5" y="0.5" width="11" height="12" fill="#e0e0e0" stroke="#999"/><path d="M2 4 H10 M2 7 H10 M2 10 H10" stroke="#888" stroke-width="1"/></svg><svg style="position:absolute;left:679px;top:48px;" width="7" height="4" viewBox="0 0 7 4"><path d="M0 0 H7 L3.5 4Z" fill="#555"/></svg><svg style="position:absolute;left:693px;top:41px;" width="19" height="19" viewBox="0 0 19 19"><rect x="0.5" y="0.5" width="10" height="10" fill="#f0e040" stroke="#c8b020" stroke-width="0.6"/><rect x="4" y="4" width="10" height="10" fill="#f4e450" stroke="#c8b020" stroke-width="0.6"/><rect x="10" y="11" width="8" height="7" rx="1.5" fill="#e06060"/><path d="M12 16.5 L16 12.5" stroke="#fff" stroke-width="1.2"/></svg><svg style="position:absolute;left:715px;top:48px;" width="7" height="4" viewBox="0 0 7 4"><path d="M0 0 H7 L3.5 4Z" fill="#555"/></svg><svg style="position:absolute;left:729px;top:41px;" width="18" height="18" viewBox="0 0 18 18"><rect x="0.5" y="0.5" width="12" height="12" fill="#f4e04a" stroke="#d0b830" stroke-width="0.6"/><path d="M14 18 L11.5 13.5 A3 3 0 1 1 16.5 13.5Z" fill="#7a8ea8"/></svg><svg style="position:absolute;left:756px;top:41px;" width="4" height="18" viewBox="0 0 4 18"><rect x="0" y="0" width="1" height="1" fill="#c4c4c4"/><rect x="3" y="1.5" width="1" height="1" fill="#c4c4c4"/><rect x="0" y="3" width="1" height="1" fill="#c4c4c4"/><rect x="3" y="4.5" width="1" height="1" fill="#c4c4c4"/><rect x="0" y="6" width="1" height="1" fill="#c4c4c4"/><rect x="3" y="7.5" width="1" height="1" fill="#c4c4c4"/><rect x="0" y="9" width="1" height="1" fill="#c4c4c4"/><rect x="3" y="10.5" width="1" height="1" fill="#c4c4c4"/><rect x="0" y="12" width="1" height="1" fill="#c4c4c4"/><rect x="3" y="13.5" width="1" height="1" fill="#c4c4c4"/><rect x="0" y="15" width="1" height="1" fill="#c4c4c4"/><rect x="3" y="16.5" width="1" height="1" fill="#c4c4c4"/></svg><svg style="position:absolute;left:766px;top:41px;" width="20" height="19" viewBox="0 0 20 19"><circle cx="7.5" cy="7.5" r="7" fill="#6a90c8" stroke="#4a6aa0" stroke-width="0.6"/><text x="5.3" y="12" font-size="10" fill="#fff" font-style="italic" font-weight="bold" font-family="Liberation Serif">i</text><path d="M11 8 L11 18 L13.3 15.8 L15.5 19 L17 18.2 L15 15 L18 14.5Z" fill="#fff" stroke="#444" stroke-width="0.8"/></svg><svg style="position:absolute;left:794px;top:41px;" width="18" height="18" viewBox="0 0 18 18"><rect x="1" y="1" width="15" height="15" fill="none" stroke="#888" stroke-width="1"/><path d="M1 5 H16 M1 9.5 H16 M1 14 H16" stroke="#999"/><circle cx="5" cy="5" r="1.6" fill="#e07070"/><circle cx="11" cy="5" r="1.6" fill="#e07070"/><circle cx="4" cy="9.5" r="1.6" fill="#80c080"/><circle cx="8" cy="9.5" r="1.6" fill="#80c080"/><circle cx="5" cy="14" r="1.6" fill="#80a8d8"/><circle cx="9" cy="14" r="1.6" fill="#80a8d8"/><circle cx="13" cy="14" r="1.6" fill="#80a8d8"/><rect x="0" y="16" width="17" height="2" fill="#555"/></svg><svg style="position:absolute;left:820px;top:41px;" width="18" height="18" viewBox="0 0 18 18"><g fill="#6a90cc"><circle cx="9" cy="9" r="5.5"/><rect x="7.6" y="0.5" width="2.8" height="4.5" transform="rotate(0 9 9)"/><rect x="7.6" y="0.5" width="2.8" height="4.5" transform="rotate(45 9 9)"/><rect x="7.6" y="0.5" width="2.8" height="4.5" transform="rotate(90 9 9)"/><rect x="7.6" y="0.5" width="2.8" height="4.5" transform="rotate(135 9 9)"/><rect x="7.6" y="0.5" width="2.8" height="4.5" transform="rotate(180 9 9)"/><rect x="7.6" y="0.5" width="2.8" height="4.5" transform="rotate(225 9 9)"/><rect x="7.6" y="0.5" width="2.8" height="4.5" transform="rotate(270 9 9)"/><rect x="7.6" y="0.5" width="2.8" height="4.5" transform="rotate(315 9 9)"/></g><circle cx="9" cy="9" r="2.2" fill="#f0f0f0"/></svg><svg style="position:absolute;left:849px;top:41px;" width="13" height="18" viewBox="0 0 13 18"><path d="M11.5 3.5 V1 H1 L6 9 L1 17 H11.5 V14.5" fill="none" stroke="#b0209a" stroke-width="2.4"/></svg><svg style="position:absolute;left:873px;top:41px;" width="18" height="18" viewBox="0 0 18 18"><rect x="0.5" y="0.5" width="16" height="16" fill="#dde8f5" stroke="#7a9ac8"/><rect x="0.5" y="0.5" width="16" height="3.5" fill="#a8c0e0"/><path d="M3 7 H14 M3 10 H14 M3 13 H14" stroke="#5a80b8" stroke-width="1.1"/></svg><svg style="position:absolute;left:895px;top:48px;" width="7" height="4" viewBox="0 0 7 4"><path d="M0 0 H7 L3.5 4Z" fill="#555"/></svg><div style="position:absolute;left:905px;top:36px;width:25px;height:27px;background:#dcdcdc;border:1px solid #c4c4c4;border-radius:2px;box-sizing:border-box"></div><div style="position:absolute;left:931px;top:36px;width:9px;height:27px;background:#dcdcdc;border:1px solid #c4c4c4;border-radius:2px;box-sizing:border-box"></div><svg style="position:absolute;left:908px;top:44px;" width="19" height="12" viewBox="0 0 19 12"><path d="M1 1.5 H18" stroke="#444" stroke-width="1.5"/><rect x="1" y="5" width="17" height="6" fill="#e8e8e8" stroke="#555" stroke-width="1.1"/><path d="M4 5 V8 M7 5 V7 M10 5 V8 M13 5 V7 M16 5 V8" stroke="#555" stroke-width="0.8"/></svg><svg style="position:absolute;left:932px;top:48px;" width="7" height="4" viewBox="0 0 7 4"><path d="M0 0 H7 L3.5 4Z" fill="#555"/></svg><svg style="position:absolute;left:945px;top:42px;" width="19" height="17" viewBox="0 0 19 17"><path d="M2.5 0.5 H16 Q18.5 0.5 18.5 3 V8 Q18.5 10.5 16 10.5 H7 L4 13 L4.5 10.5 H2.5 Q0.5 10.5 0.5 8 V3 Q0.5 0.5 2.5 0.5Z" fill="#fbee88" stroke="#d8c850" stroke-width="0.8"/><circle cx="4" cy="14" r="2.6" fill="#6a9a50"/></svg><svg style="position:absolute;left:970px;top:41px;" width="20" height="19" viewBox="0 0 20 19"><circle cx="8" cy="8" r="6" fill="none" stroke="#d8d8d8" stroke-width="2.2"/><circle cx="8" cy="8" r="2.5" fill="#ddd"/><path d="M12 12 L18 18" stroke="#d8d8d8" stroke-width="2.5"/></svg><svg style="position:absolute;left:995px;top:48px;" width="7" height="4" viewBox="0 0 7 4"><path d="M0 0 H7 L3.5 4Z" fill="#bbb"/></svg><svg style="position:absolute;left:4px;top:72px;" width="4" height="18" viewBox="0 0 4 18"><rect x="0" y="0" width="1" height="1" fill="#c4c4c4"/><rect x="3" y="1.5" width="1" height="1" fill="#c4c4c4"/><rect x="0" y="3" width="1" height="1" fill="#c4c4c4"/><rect x="3" y="4.5" width="1" height="1" fill="#c4c4c4"/><rect x="0" y="6" width="1" height="1" fill="#c4c4c4"/><rect x="3" y="7.5" width="1" height="1" fill="#c4c4c4"/><rect x="0" y="9" width="1" height="1" fill="#c4c4c4"/><rect x="3" y="10.5" width="1" height="1" fill="#c4c4c4"/><rect x="0" y="12" width="1" height="1" fill="#c4c4c4"/><rect x="3" y="13.5" width="1" height="1" fill="#c4c4c4"/><rect x="0" y="15" width="1" height="1" fill="#c4c4c4"/><rect x="3" y="16.5" width="1" height="1" fill="#c4c4c4"/></svg><svg style="position:absolute;left:14px;top:71px;" width="20" height="20" viewBox="0 0 20 20"><rect x="1" y="6" width="10" height="11" fill="#e07a30" transform="rotate(-12 6 11)"/><rect x="3" y="4" width="10" height="11" fill="#f0c040" transform="rotate(-6 8 10)"/><rect x="6" y="1" width="11" height="11" fill="#5a88c8" transform="rotate(8 11 6)"/><circle cx="15" cy="15.5" r="4.3" fill="#4aa870"/><path d="M15 12.8 V18.2 M12.3 15.5 H17.7" stroke="#fff" stroke-width="1.6"/></svg><svg style="position:absolute;left:40px;top:71px;" width="20" height="20" viewBox="0 0 20 20"><path d="M1 7 L10 3 L19 7 V15 L10 19 L1 15Z" fill="#e8c830" stroke="#8a7a10" stroke-width="0.9"/><path d="M1 7 L10 11 L19 7" fill="none" stroke="#8a7a10" stroke-width="0.9"/><circle cx="10" cy="5.5" r="4.8" fill="#5a88c8"/><path d="M7 4 Q10 2 12 5 Q11 8 8 7Z" fill="#2a5a98"/><rect x="11" y="11" width="8" height="8" rx="1" fill="#e8d030" stroke="#b09a10" stroke-width="0.6"/><path d="M15.0 12.2 L15.0 17.8 M12.2 15.0 L17.8 15.0 M12.8 12.8 L17.2 17.2 M17.2 12.8 L12.8 17.2" stroke="#fff" stroke-width="0.8"/></svg><svg style="position:absolute;left:66px;top:71px;" width="21" height="20" viewBox="0 0 21 20"><path d="M2 3 L7 15 L14 3" stroke="#444" stroke-width="1.3" fill="none"/><circle cx="2" cy="3" r="1.8" fill="#fff" stroke="#444"/><circle cx="14" cy="3" r="1.8" fill="#fff" stroke="#444"/><circle cx="7" cy="15" r="1.8" fill="#fff" stroke="#444"/><rect x="12" y="12" width="8" height="8" rx="1" fill="#e8d030" stroke="#b09a10" stroke-width="0.6"/><path d="M16.0 13.2 L16.0 18.8 M13.2 16.0 L18.8 16.0 M13.8 13.8 L18.2 18.2 M18.2 13.8 L13.8 18.2" stroke="#fff" stroke-width="0.8"/></svg><svg style="position:absolute;left:92px;top:71px;" width="20" height="20" viewBox="0 0 20 20"><path d="M1 19 Q3 8 15 1 Q13 12 4 15Z" fill="#6a92c8" stroke="#3a5a90" stroke-width="0.7"/><rect x="12" y="12" width="8" height="8" rx="1" fill="#e8d030" stroke="#b09a10" stroke-width="0.6"/><path d="M16.0 13.2 L16.0 18.8 M13.2 16.0 L18.8 16.0 M13.8 13.8 L18.2 18.2 M18.2 13.8 L13.8 18.2" stroke="#fff" stroke-width="0.8"/></svg><svg style="position:absolute;left:120px;top:71px;" width="20" height="20" viewBox="0 0 20 20"><rect x="1" y="5" width="15" height="9" rx="1.5" fill="#5a88c8"/><path d="M4 2 V5 M7 2 V5 M10 2 V5 M13 2 V5 M4 14 V17 M7 14 V17 M10 14 V17" stroke="#5a88c8" stroke-width="1.2"/><rect x="12" y="12" width="8" height="8" rx="1" fill="#e8d030" stroke="#b09a10" stroke-width="0.6"/><path d="M16.0 13.2 L16.0 18.8 M13.2 16.0 L18.8 16.0 M13.8 13.8 L18.2 18.2 M18.2 13.8 L13.8 18.2" stroke="#fff" stroke-width="0.8"/></svg><svg style="position:absolute;left:146px;top:71px;" width="20" height="20" viewBox="0 0 20 20"><rect x="0.5" y="0.5" width="16" height="16" fill="#4a78b8"/><path d="M8.5 0.5 V16.5 M0.5 8.5 H16.5" stroke="#c8d8f0" stroke-width="1"/><path d="M2 2 L7 7 M10 7 L15 2" stroke="#c8d8f0" stroke-width="0.8"/><rect x="12" y="12" width="8" height="8" rx="1" fill="#e8d030" stroke="#b09a10" stroke-width="0.6"/><path d="M16.0 13.2 L16.0 18.8 M13.2 16.0 L18.8 16.0 M13.8 13.8 L18.2 18.2 M18.2 13.8 L13.8 18.2" stroke="#fff" stroke-width="0.8"/></svg><svg style="position:absolute;left:172px;top:71px;" width="20" height="20" viewBox="0 0 20 20"><rect x="0.5" y="0.5" width="17" height="17" rx="1.5" fill="#a8c0e0" stroke="#6a8ab8"/><path d="M4 3 L9 14 L14 3" stroke="#405a80" stroke-width="1.3" fill="none"/><rect x="12" y="12" width="8" height="8" rx="1" fill="#e8d030" stroke="#b09a10" stroke-width="0.6"/><path d="M16.0 13.2 L16.0 18.8 M13.2 16.0 L18.8 16.0 M13.8 13.8 L18.2 18.2 M18.2 13.8 L13.8 18.2" stroke="#fff" stroke-width="0.8"/></svg><svg style="position:absolute;left:202px;top:72px;" width="4" height="18" viewBox="0 0 4 18"><rect x="0" y="0" width="1" height="1" fill="#c4c4c4"/><rect x="3" y="1.5" width="1" height="1" fill="#c4c4c4"/><rect x="0" y="3" width="1" height="1" fill="#c4c4c4"/><rect x="3" y="4.5" width="1" height="1" fill="#c4c4c4"/><rect x="0" y="6" width="1" height="1" fill="#c4c4c4"/><rect x="3" y="7.5" width="1" height="1" fill="#c4c4c4"/><rect x="0" y="9" width="1" height="1" fill="#c4c4c4"/><rect x="3" y="10.5" width="1" height="1" fill="#c4c4c4"/><rect x="0" y="12" width="1" height="1" fill="#c4c4c4"/><rect x="3" y="13.5" width="1" height="1" fill="#c4c4c4"/><rect x="0" y="15" width="1" height="1" fill="#c4c4c4"/><rect x="3" y="16.5" width="1" height="1" fill="#c4c4c4"/></svg><svg style="position:absolute;left:212px;top:71px;" width="20" height="20" viewBox="0 0 20 20"><path d="M2 17 L12 3 L15 5 L5 19Z M6 15 L14 3 L17 5 L9 17Z" fill="#dcdcdc" stroke="#cfcfcf" stroke-width="0.6"/><path d="M16 17 L19 17 L17.5 18.5Z" fill="#666"/></svg><svg style="position:absolute;left:240px;top:71px;" width="14" height="20" viewBox="0 0 14 20"><path d="M1.5 18.5 L3 13 L10.5 1.5 L13 3 L5.5 14.5Z" fill="#f0d040" stroke="#807020" stroke-width="0.8"/><path d="M1.5 18.5 L3 13 L5.5 14.5Z" fill="#6a9a60"/></svg><svg style="position:absolute;left:265px;top:72px;" width="17" height="17" viewBox="0 0 17 17"><rect x="0.5" y="0.5" width="16" height="16" rx="2" fill="#dedede"/><rect x="3" y="2" width="10" height="5" fill="#f0f0f0"/><rect x="4" y="10" width="8" height="6" fill="#f0f0f0"/></svg><svg style="position:absolute;left:292px;top:71px;" width="16" height="20" viewBox="0 0 16 20"><path d="M3 18 Q1 8 6 3" stroke="#e0e0e0" stroke-width="1.5" fill="none" stroke-dasharray="2 2"/><circle cx="14" cy="2.5" r="1.8" fill="#e0e0e0"/></svg><svg style="position:absolute;left:313px;top:79px;" width="7" height="4" viewBox="0 0 7 4"><path d="M0 0 H7 L3.5 4Z" fill="#888"/></svg><svg style="position:absolute;left:327px;top:71px;" width="19" height="19" viewBox="0 0 19 19"><circle cx="3" cy="7" r="2" fill="#e4e4e4"/><circle cx="9" cy="3" r="2" fill="#e4e4e4"/><circle cx="16" cy="6" r="2" fill="#e4e4e4"/><rect x="10" y="10" width="7" height="8" fill="none" stroke="#ddd" stroke-width="1.5"/></svg><svg style="position:absolute;left:355px;top:71px;" width="16" height="19" viewBox="0 0 16 19"><path d="M1 18 L3 2 H9" stroke="#ddd" stroke-width="1.3" fill="none"/><path d="M6 8 L14 17 M14 8 L6 17" stroke="#d8d8d8" stroke-width="1.6"/></svg><svg style="position:absolute;left:376px;top:79px;" width="7" height="4" viewBox="0 0 7 4"><path d="M0 0 H7 L3.5 4Z" fill="#888"/></svg><svg style="position:absolute;left:390px;top:72px;" width="17" height="17" viewBox="0 0 17 17"><rect x="0.5" y="0.5" width="16" height="16" fill="#e0e0e0"/><path d="M2 4 H14 M2 8 H14 M2 12 H14" stroke="#f0f0f0"/><path d="M9 14 L15 2" stroke="#c8c8c8" stroke-width="1.5"/></svg><svg style="position:absolute;left:416px;top:71px;" width="16" height="19" viewBox="0 0 16 19"><rect x="1" y="3" width="14" height="3" fill="#e8d8d8"/><path d="M2.5 6 H13.5 L12.5 18 H3.5Z" fill="#ebdcdc"/><path d="M5.5 8 V16 M8 8 V16 M10.5 8 V16" stroke="#f6f0f0" stroke-width="1"/></svg><svg style="position:absolute;left:442px;top:71px;" width="19" height="18" viewBox="0 0 19 18"><path d="M2 4 L14 13 M2 13 L14 4" stroke="#d8d8d8" stroke-width="1.6"/><circle cx="15.5" cy="4" r="2.5" fill="none" stroke="#d4d4d4" stroke-width="1.5"/><circle cx="15.5" cy="13" r="2.5" fill="none" stroke="#d4d4d4" stroke-width="1.5"/></svg><svg style="position:absolute;left:471px;top:72px;" width="13" height="17" viewBox="0 0 13 17"><rect x="3" y="0.5" width="9" height="12" fill="#f4f4f4" stroke="#ddd"/><rect x="0.5" y="4" width="9" height="12" fill="#f4f4f4" stroke="#ddd"/></svg><svg style="position:absolute;left:497px;top:72px;" width="14" height="17" viewBox="0 0 14 17"><rect x="0.5" y="0.5" width="13" height="16" fill="#f0f0f0" stroke="#d8d8d8"/><path d="M3 5 H11 M3 8 H11 M3 11 H11" stroke="#ddd"/></svg><svg style="position:absolute;left:523px;top:73px;" width="15" height="15" viewBox="0 0 15 15"><path d="M4 2 L0.5 6 L4 10 V7.5 Q11 6 10 14 Q15 5 4 4.5Z" fill="#dcdcdc"/></svg><svg style="position:absolute;left:549px;top:73px;" width="15" height="15" viewBox="0 0 15 15"><path d="M11 2 L14.5 6 L11 10 V7.5 Q4 6 5 14 Q0 5 11 4.5Z" fill="#dcdcdc"/></svg><svg style="position:absolute;left:577px;top:72px;" width="4" height="18" viewBox="0 0 4 18"><rect x="0" y="0" width="1" height="1" fill="#c4c4c4"/><rect x="3" y="1.5" width="1" height="1" fill="#c4c4c4"/><rect x="0" y="3" width="1" height="1" fill="#c4c4c4"/><rect x="3" y="4.5" width="1" height="1" fill="#c4c4c4"/><rect x="0" y="6" width="1" height="1" fill="#c4c4c4"/><rect x="3" y="7.5" width="1" height="1" fill="#c4c4c4"/><rect x="0" y="9" width="1" height="1" fill="#c4c4c4"/><rect x="3" y="10.5" width="1" height="1" fill="#c4c4c4"/><rect x="0" y="12" width="1" height="1" fill="#c4c4c4"/><rect x="3" y="13.5" width="1" height="1" fill="#c4c4c4"/><rect x="0" y="15" width="1" height="1" fill="#c4c4c4"/><rect x="3" y="16.5" width="1" height="1" fill="#c4c4c4"/></svg><svg style="position:absolute;left:586px;top:75px;" width="18" height="11" viewBox="0 0 18 11"><path d="M0.5 5 L4 1 H17 V9 H4Z" fill="#f0d848" stroke="#b8a030" stroke-width="0.7"/><text x="5" y="7.3" font-size="5.5" fill="#554" font-family="Liberation Sans" font-weight="bold">abc</text></svg><svg style="position:absolute;left:614px;top:72px;" width="17" height="19" viewBox="0 0 17 19"><circle cx="6.5" cy="7" r="6" fill="#e0c020"/><path d="M6.5 7 L6.5 1 A6 6 0 0 1 12.5 7Z" fill="#c02020"/><path d="M6.5 7 L12.5 7 A6 6 0 0 1 3 12Z" fill="#a01818"/><path d="M6.5 7 L3 12 A6 6 0 0 1 0.5 7Z" fill="#20a040"/><rect x="8" y="9" width="3" height="9" fill="#20a040"/><rect x="11" y="14" width="4" height="4" fill="#601010"/><rect x="6" y="14" width="2" height="4" fill="#e8c020"/></svg><div style="position:absolute;left:638px;top:72px;width:1px;height:18px;background:#dedede"></div><svg style="position:absolute;left:645px;top:74px;" width="19" height="17" viewBox="0 0 19 17"><path d="M0.5 5 L5 0.5 H17 V9.5 H5Z" fill="#c0d8f0" stroke="#7a9ac8" stroke-width="0.7"/><text x="6" y="7" font-size="5.5" fill="#335" font-family="Liberation Sans" font-weight="bold">ab</text><circle cx="13" cy="12.5" r="3.5" fill="#c01818"/><path d="M13 5 V9" stroke="#666" stroke-width="0.7"/></svg><svg style="position:absolute;left:671px;top:75px;" width="18" height="11" viewBox="0 0 18 11"><path d="M0.5 5 L4 1 H17 V9 H4Z" fill="#fbe0e0" stroke="#d04040" stroke-width="0.9"/><text x="5" y="7.3" font-size="5.5" fill="#d03030" font-family="Liberation Sans" font-weight="bold">abc</text></svg><div style="position:absolute;left:696px;top:72px;width:1px;height:18px;background:#dedede"></div><svg style="position:absolute;left:703px;top:74px;" width="19" height="17" viewBox="0 0 19 17"><path d="M0.5 4.5 L4 0.5 H17 V8.5 H4Z" fill="#f0d848" stroke="#b8a030" stroke-width="0.7"/><text x="5" y="6.8" font-size="5.5" fill="#554" font-family="Liberation Sans" font-weight="bold">abc</text><circle cx="14" cy="12.5" r="3.5" fill="#c01818"/></svg><svg style="position:absolute;left:730px;top:74px;" width="19" height="17" viewBox="0 0 19 17"><path d="M0.5 4.5 L4 0.5 H17 V8.5 H4Z" fill="#f0d848" stroke="#b8a030" stroke-width="0.7"/><text x="5" y="6.8" font-size="5.5" fill="#554" font-family="Liberation Sans" font-weight="bold">abc</text><ellipse cx="12" cy="13" rx="6" ry="3" fill="#fff" stroke="#3a5a98" stroke-width="0.9"/><circle cx="12" cy="13" r="1.8" fill="#3a5a98"/></svg><svg style="position:absolute;left:756px;top:74px;" width="19" height="17" viewBox="0 0 19 17"><path d="M0.5 4.5 L4 0.5 H17 V8.5 H4Z" fill="#f0d848" stroke="#b8a030" stroke-width="0.7"/><text x="5" y="6.8" font-size="5.5" fill="#554" font-family="Liberation Sans" font-weight="bold">abc</text><rect x="10" y="9" width="8" height="8" rx="1" fill="#334455"/><path d="M11.5 13 H16 M14 11 L16 13 L14 15" stroke="#fff" stroke-width="1.3" fill="none"/></svg><svg style="position:absolute;left:782px;top:74px;" width="19" height="17" viewBox="0 0 19 17"><path d="M0.5 4.5 L4 0.5 H17 V8.5 H4Z" fill="#f0d848" stroke="#b8a030" stroke-width="0.7"/><text x="5" y="6.8" font-size="5.5" fill="#554" font-family="Liberation Sans" font-weight="bold">abc</text><rect x="10" y="9" width="8" height="8" rx="1" fill="#334455"/><circle cx="14" cy="13" r="2.3" fill="none" stroke="#fff" stroke-width="1.1"/></svg><svg style="position:absolute;left:809px;top:74px;" width="19" height="17" viewBox="0 0 19 17"><path d="M0.5 4.5 L4 0.5 H17 V8.5 H4Z" fill="#f0d848" stroke="#b8a030" stroke-width="0.7"/><text x="5" y="6.8" font-size="5.5" fill="#554" font-family="Liberation Sans" font-weight="bold">abc</text><rect x="10" y="9" width="8" height="8" rx="1" fill="#e8d040"/><path d="M11.5 16 L17 10.5" stroke="#fff" stroke-width="1.5"/></svg><svg style="position:absolute;left:839px;top:72px;" width="4" height="18" viewBox="0 0 4 18"><rect x="0" y="0" width="1" height="1" fill="#c4c4c4"/><rect x="3" y="1.5" width="1" height="1" fill="#c4c4c4"/><rect x="0" y="3" width="1" height="1" fill="#c4c4c4"/><rect x="3" y="4.5" width="1" height="1" fill="#c4c4c4"/><rect x="0" y="6" width="1" height="1" fill="#c4c4c4"/><rect x="3" y="7.5" width="1" height="1" fill="#c4c4c4"/><rect x="0" y="9" width="1" height="1" fill="#c4c4c4"/><rect x="3" y="10.5" width="1" height="1" fill="#c4c4c4"/><rect x="0" y="12" width="1" height="1" fill="#c4c4c4"/><rect x="3" y="13.5" width="1" height="1" fill="#c4c4c4"/><rect x="0" y="15" width="1" height="1" fill="#c4c4c4"/><rect x="3" y="16.5" width="1" height="1" fill="#c4c4c4"/></svg><svg style="position:absolute;left:847px;top:71px;" width="21" height="20" viewBox="0 0 21 20"><circle cx="10" cy="8.5" r="8" fill="#a8c4e4" stroke="#3a5a80" stroke-width="1"/><path d="M4 5 Q8 3 9 7 Q6 10 4 8Z M11 3 Q15 4 16 8 Q13 9 11 6Z" fill="#3a5a80"/><circle cx="6" cy="16.5" r="3" fill="#111"/><circle cx="14" cy="16.5" r="3" fill="#111"/><rect x="6" y="12" width="8" height="4" fill="#111"/></svg><svg style="position:absolute;left:878px;top:72px;" width="4" height="18" viewBox="0 0 4 18"><rect x="0" y="0" width="1" height="1" fill="#c4c4c4"/><rect x="3" y="1.5" width="1" height="1" fill="#c4c4c4"/><rect x="0" y="3" width="1" height="1" fill="#c4c4c4"/><rect x="3" y="4.5" width="1" height="1" fill="#c4c4c4"/><rect x="0" y="6" width="1" height="1" fill="#c4c4c4"/><rect x="3" y="7.5" width="1" height="1" fill="#c4c4c4"/><rect x="0" y="9" width="1" height="1" fill="#c4c4c4"/><rect x="3" y="10.5" width="1" height="1" fill="#c4c4c4"/><rect x="0" y="12" width="1" height="1" fill="#c4c4c4"/><rect x="3" y="13.5" width="1" height="1" fill="#c4c4c4"/><rect x="0" y="15" width="1" height="1" fill="#c4c4c4"/><rect x="3" y="16.5" width="1" height="1" fill="#c4c4c4"/></svg><svg style="position:absolute;left:888px;top:72px;" width="18" height="19" viewBox="0 0 18 19"><path d="M8 0.5 Q3 0.5 3 3.5 V6 H8.5 V7 H1.8 Q-0.5 7 0.5 11.5 Q1 14 3 14 H4.5 V11 Q4.5 9.5 6.5 9.5 H11 Q12.5 9.5 12.5 8 V3.5 Q12.5 0.5 8 0.5Z" fill="#3a72b0"/><path d="M9 17.5 Q14 17.5 14 14.5 V12 H8.5 V11 H15.2 Q17.5 11 16.5 6.5 Q16 4 14 4 H12.5 V7 Q12.5 8.5 10.5 8.5 H6 Q4.5 8.5 4.5 10 V14.5 Q4.5 17.5 9 17.5Z" fill="#f4d040"/><path d="M12 16 L15 17.5 L12 19" stroke="#333" stroke-width="0.9" fill="none"/></svg><svg style="position:absolute;left:916px;top:72px;" width="4" height="18" viewBox="0 0 4 18"><rect x="0" y="0" width="1" height="1" fill="#c4c4c4"/><rect x="3" y="1.5" width="1" height="1" fill="#c4c4c4"/><rect x="0" y="3" width="1" height="1" fill="#c4c4c4"/><rect x="3" y="4.5" width="1" height="1" fill="#c4c4c4"/><rect x="0" y="6" width="1" height="1" fill="#c4c4c4"/><rect x="3" y="7.5" width="1" height="1" fill="#c4c4c4"/><rect x="0" y="9" width="1" height="1" fill="#c4c4c4"/><rect x="3" y="10.5" width="1" height="1" fill="#c4c4c4"/><rect x="0" y="12" width="1" height="1" fill="#c4c4c4"/><rect x="3" y="13.5" width="1" height="1" fill="#c4c4c4"/><rect x="0" y="15" width="1" height="1" fill="#c4c4c4"/><rect x="3" y="16.5" width="1" height="1" fill="#c4c4c4"/></svg><svg style="position:absolute;left:927px;top:72px;" width="17" height="18" viewBox="0 0 17 18"><rect x="0.5" y="0.5" width="16" height="17" fill="#5a88c8" stroke="#2a3a50"/><rect x="0.5" y="0.5" width="4" height="17" fill="#1a2a3a"/><text x="7" y="13" font-size="11" fill="#fff" font-family="Liberation Sans">?</text></svg><svg style="position:absolute;left:955px;top:72px;" width="4" height="18" viewBox="0 0 4 18"><rect x="0" y="0" width="1" height="1" fill="#c4c4c4"/><rect x="3" y="1.5" width="1" height="1" fill="#c4c4c4"/><rect x="0" y="3" width="1" height="1" fill="#c4c4c4"/><rect x="3" y="4.5" width="1" height="1" fill="#c4c4c4"/><rect x="0" y="6" width="1" height="1" fill="#c4c4c4"/><rect x="3" y="7.5" width="1" height="1" fill="#c4c4c4"/><rect x="0" y="9" width="1" height="1" fill="#c4c4c4"/><rect x="3" y="10.5" width="1" height="1" fill="#c4c4c4"/><rect x="0" y="12" width="1" height="1" fill="#c4c4c4"/><rect x="3" y="13.5" width="1" height="1" fill="#c4c4c4"/><rect x="0" y="15" width="1" height="1" fill="#c4c4c4"/><rect x="3" y="16.5" width="1" height="1" fill="#c4c4c4"/></svg><div style="position:absolute;left:1535px;top:58px;width:1px;height:758px;background:#111"></div></body></html>
